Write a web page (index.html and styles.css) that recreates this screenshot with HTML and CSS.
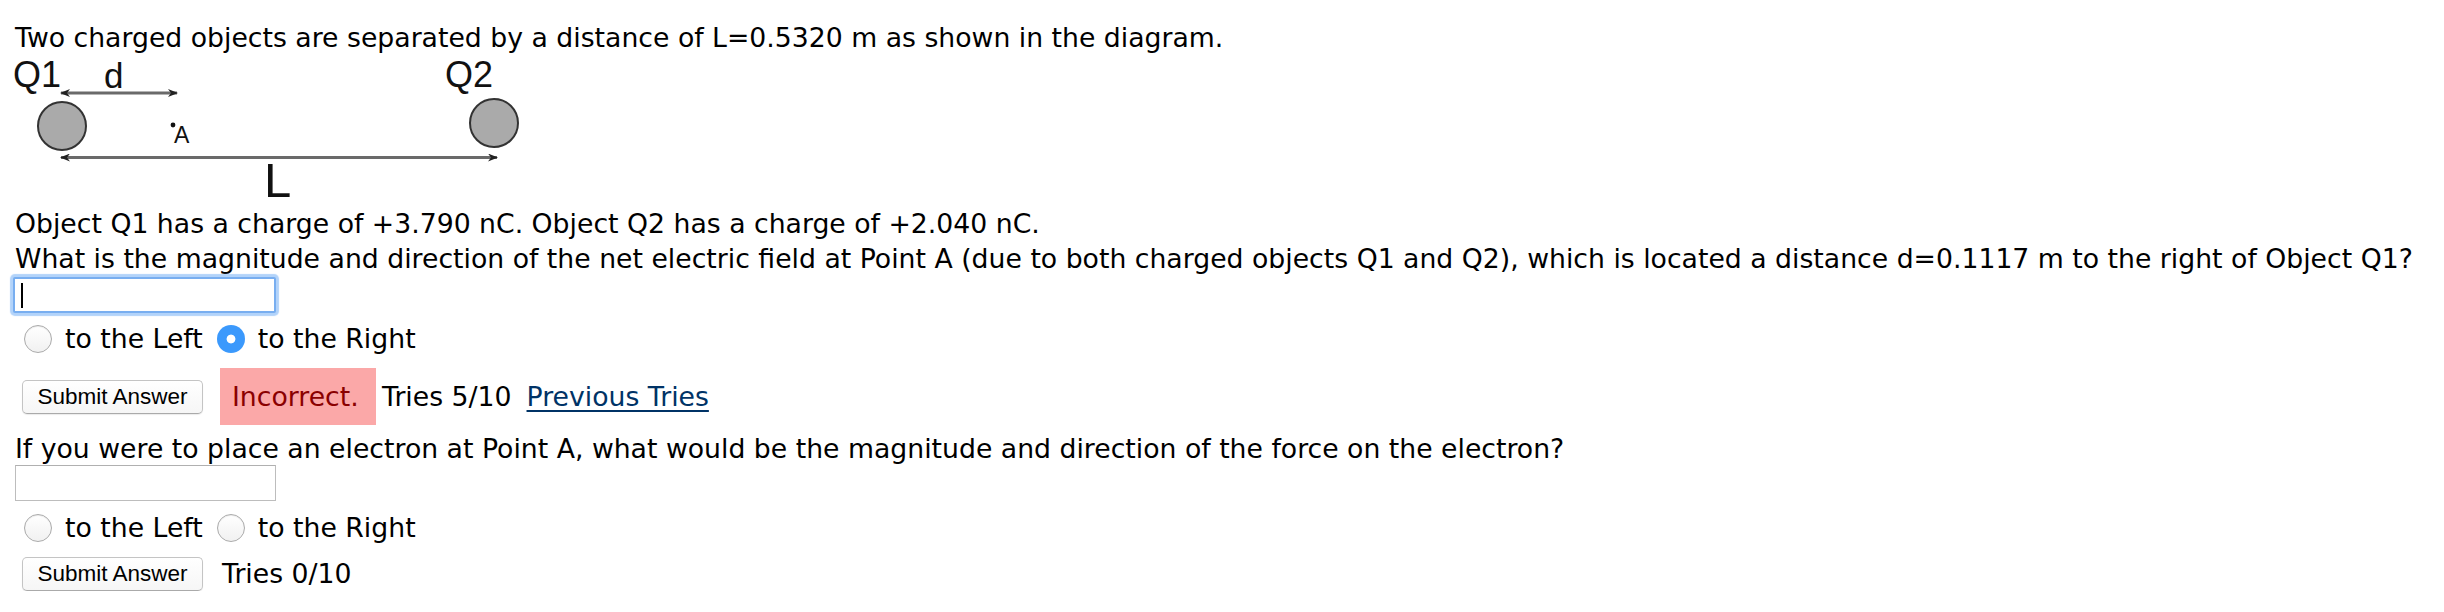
FILE: index.html
```html
<!DOCTYPE html>
<html>
<head>
<meta charset="utf-8">
<link rel="stylesheet" href="styles.css">
</head>
<body>
<div class="problem">
  <p class="txt">Two charged objects are separated by a distance of L=0.5320 m as shown in the diagram.</p>
  <svg class="diagram" width="520" height="151" viewBox="0 0 520 151" xmlns="http://www.w3.org/2000/svg">
    <defs>
      <marker id="ah" viewBox="0 0 10 8" refX="9" refY="4" markerWidth="10" markerHeight="8" markerUnits="userSpaceOnUse" orient="auto-start-reverse">
        <path d="M0,0 L10,4 L0,8 L3,4 Z" fill="#222"/>
      </marker>
    </defs>
    <text class="lbl" x="3" y="32">Q1</text>
    <text class="lbl-d" x="94" y="33">d</text>
    <text class="lbl" x="435" y="32">Q2</text>
    <line x1="51" y1="38" x2="167" y2="38" stroke="#6a6a6a" stroke-width="3" marker-start="url(#ah)" marker-end="url(#ah)"/>
    <circle cx="52" cy="71" r="24" fill="#aaaaaa" stroke="#333" stroke-width="2"/>
    <circle cx="484" cy="68" r="24" fill="#aaaaaa" stroke="#333" stroke-width="2"/>
    <circle cx="163" cy="70" r="2.4" fill="#111"/>
    <text class="lbl-a" x="164" y="88">A</text>
    <line x1="51" y1="102.5" x2="487" y2="102.5" stroke="#6a6a6a" stroke-width="3" marker-start="url(#ah)" marker-end="url(#ah)"/>
    <text class="lbl-l" x="254" y="142">L</text>
  </svg>
  <p class="txt">Object Q1 has a charge of +3.790 nC. Object Q2 has a charge of +2.040 nC.</p>
  <p class="txt">What is the magnitude and direction of the net electric field at Point A (due to both charged objects Q1 and Q2), which is located a distance d=0.1117 m to the right of Object Q1?</p>
  <div class="field-wrap">
    <input class="answer focused" type="text">
    <span class="caret"></span>
  </div>
  <div class="opts first-opts">
    <span class="radio r1"></span><span class="opt-text">to the Left</span>
    <span class="radio r2 checked"></span><span class="opt-text">to the Right</span>
  </div>
  <div class="submit-row row1">
    <button class="submit" type="button">Submit Answer</button>
    <span class="incorrect">Incorrect.</span>
    <span class="tries">Tries 5/10</span>
    <a class="prev" href="#">Previous Tries</a>
  </div>
  <p class="txt q2">If you were to place an electron at Point A, what would be the magnitude and direction of the force on the electron?</p>
  <input class="answer plain" type="text">
  <div class="opts second-opts">
    <span class="radio r1"></span><span class="opt-text">to the Left</span>
    <span class="radio r2"></span><span class="opt-text">to the Right</span>
  </div>
  <div class="submit-row row2">
    <button class="submit" type="button">Submit Answer</button>
    <span class="tries tries0">Tries 0/10</span>
  </div>
</div>
</body>
</html>
```
FILE: styles.css
```css
html, body {
  margin: 0;
  padding: 0;
  background: #ffffff;
}

body {
  font-family: "DejaVu Sans", Verdana, sans-serif;
  font-size: 26.7px;
  line-height: 35px;
  color: #000;
}

.problem {
  padding: 20px 0 0 15px;
}

.txt {
  margin: 0;
  white-space: nowrap;
}

.diagram {
  display: block;
  margin-left: -5px;
}

.diagram .lbl {
  font-family: "Liberation Sans", Arial, sans-serif;
  font-size: 36px;
  fill: #111;
}

.diagram .lbl-d {
  font-family: "Liberation Sans", Arial, sans-serif;
  font-size: 35px;
  fill: #111;
}

.diagram .lbl-a {
  font-family: "Liberation Sans", Arial, sans-serif;
  font-size: 23px;
  fill: #111;
}

.diagram .lbl-l {
  font-family: "Liberation Sans", Arial, sans-serif;
  font-size: 49px;
  fill: #111;
}

.field-wrap {
  position: relative;
  width: 263px;
  height: 36px;
  margin: 1px 0 0 -2px;
}

.answer {
  box-sizing: border-box;
  display: block;
  height: 36px;
  margin: 0;
  padding: 0 6px;
  font-family: "DejaVu Sans", Verdana, sans-serif;
  font-size: 22px;
  background: #fff;
  outline: none;
}

.answer.focused {
  width: 263px;
  border: 2px solid #78aef0;
  border-radius: 2px;
  box-shadow: 0 0 1px 3px #b2d3fa;
}

.caret {
  position: absolute;
  left: 8px;
  top: 6px;
  width: 2px;
  height: 25px;
  background: #000;
}

.answer.plain {
  width: 261px;
  margin-top: -1px;
  border: 1px solid #bdbdbd;
  border-top-color: #b0b0b0;
}

.opts {
  display: flex;
  align-items: center;
  height: 35px;
}

.first-opts {
  margin-top: 8px;
}

.second-opts {
  margin-top: 9px;
}

.radio {
  box-sizing: border-box;
  display: inline-block;
  width: 28px;
  height: 28px;
  border-radius: 50%;
  border: 1px solid #ababab;
  background: linear-gradient(#ffffff, #f1f1f1);
  box-shadow: inset 0 1px 1px rgba(0,0,0,0.08);
  flex: none;
}

.radio.r1 {
  margin: 0 13px 0 9px;
}

.radio.r2 {
  margin: 0 13px 0 14px;
}

.radio.checked {
  border: none;
  background: radial-gradient(circle, #ffffff 0, #ffffff 4px, #3b99fc 4.8px);
  box-shadow: none;
}

.submit-row {
  display: flex;
  align-items: center;
}

.row1 {
  height: 57px;
  margin-top: 12px;
}

.row2 {
  height: 35px;
  margin-top: 11px;
}

.submit {
  box-sizing: border-box;
  width: 181px;
  height: 34px;
  margin: 0 0 0 7px;
  padding: 0;
  font-family: "Liberation Sans", Arial, sans-serif;
  font-size: 22.5px;
  color: #000;
  border: 1px solid #c4c4c4;
  border-bottom-color: #aaaaaa;
  border-radius: 5px;
  background: linear-gradient(#ffffff, #f6f6f6);
  box-shadow: 0 1px 1px rgba(0,0,0,0.08);
}

.incorrect {
  box-sizing: border-box;
  display: flex;
  align-items: center;
  height: 57px;
  width: 156px;
  margin-left: 17px;
  padding-left: 12px;
  background: #fba8a8;
  color: #8a0000;
}

.tries {
  margin-left: 6px;
}

.tries0 {
  margin-left: 19px;
}

.prev {
  margin-left: 15px;
  color: #003366;
  text-decoration: underline;
  text-underline-offset: 4px;
  text-decoration-thickness: 2px;
}

.q2 {
  margin-top: 6px;
}
```
